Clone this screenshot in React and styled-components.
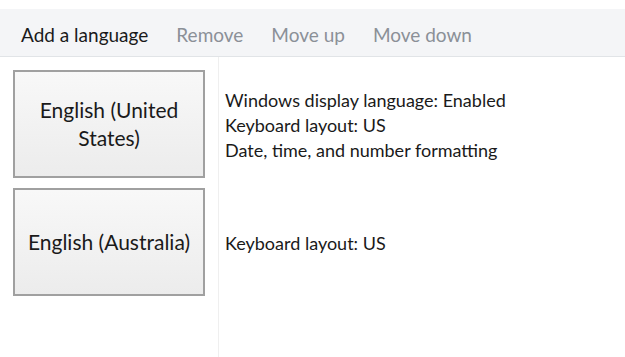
import styled, { createGlobalStyle } from "styled-components";

const GlobalStyle = createGlobalStyle`
  html, body {
    margin: 0;
    padding: 0;
    background: #ffffff;
  }
  body {
    font-family: Lato, "Noto Sans", sans-serif;
  }
`;

const languages = [
  {
    name: "English (United States)",
    details: [
      "Windows display language: Enabled",
      "Keyboard layout: US",
      "Date, time, and number formatting",
    ],
  },
  {
    name: "English (Australia)",
    details: ["Keyboard layout: US"],
  },
];

const App = () => {
  return (
    <>
      <GlobalStyle />
      <Page>
        <Toolbar>
          <ToolButton>Add a language</ToolButton>
          <ToolButton disabled>Remove</ToolButton>
          <ToolButton disabled>Move up</ToolButton>
          <ToolButton disabled>Move down</ToolButton>
        </Toolbar>
        <Body>
          <LangColumn>
            {languages.map((lang) => (
              <LangTile key={lang.name}>{lang.name}</LangTile>
            ))}
          </LangColumn>
          <InfoColumn>
            {languages.map((lang) => (
              <InfoBlock key={lang.name}>
                {lang.details.map((line) => (
                  <InfoLine key={line}>{line}</InfoLine>
                ))}
              </InfoBlock>
            ))}
          </InfoColumn>
        </Body>
      </Page>
    </>
  );
};

const Page = styled.div`
  height: 100vh;
  display: flex;
  flex-direction: column;
  padding-top: 9px;
  box-sizing: border-box;
`;

const Toolbar = styled.div`
  height: 47px;
  display: flex;
  align-items: center;
  gap: 28px;
  padding-left: 21px;
  background: #f4f5f7;
  border-bottom: 1px solid #e1e4e7;
  flex-shrink: 0;
`;

const ToolButton = styled.button`
  background: none;
  border: none;
  padding: 0;
  margin-top: 4px;
  font-family: Lato, "Noto Sans", sans-serif;
  font-size: 19px;
  color: ${(p) => (p.disabled ? "#8b9097" : "#1a1a1a")};
  cursor: ${(p) => (p.disabled ? "default" : "pointer")};
`;

const Body = styled.div`
  flex: 1;
  display: flex;
`;

const LangColumn = styled.div`
  width: 219px;
  padding: 13px 0 0 13px;
  box-sizing: border-box;
  display: flex;
  flex-direction: column;
  gap: 10px;
  border-right: 1px solid #efefef;
`;

const LangTile = styled.button`
  width: 192px;
  height: 108px;
  box-sizing: border-box;
  border: 2px solid #a0a0a0;
  background: linear-gradient(#f8f8f8, #ececec);
  font-family: Lato, "Noto Sans", sans-serif;
  font-size: 21px;
  line-height: 28px;
  color: #1a1a1a;
  padding: 0 8px;
  cursor: pointer;
`;

const InfoColumn = styled.div`
  padding: 13px 0 0 6px;
  display: flex;
  flex-direction: column;
  gap: 10px;
`;

const InfoBlock = styled.div`
  height: 108px;
  display: flex;
  flex-direction: column;
  justify-content: center;
  padding-top: 3px;
  box-sizing: border-box;
`;

const InfoLine = styled.div`
  font-size: 18px;
  line-height: 25px;
  color: #1a1a1a;
`;

export default App;
